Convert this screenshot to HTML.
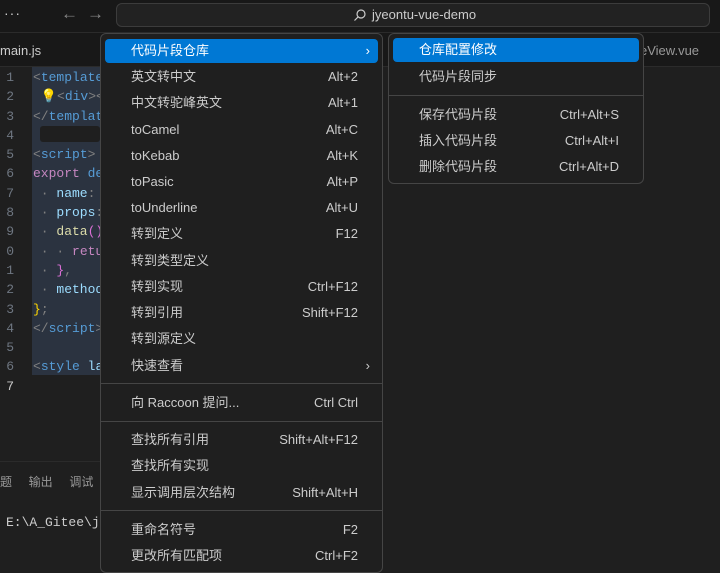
<!DOCTYPE html>
<html><head><meta charset="utf-8"><style>
*{margin:0;padding:0;box-sizing:border-box}
body{width:720px;height:568px;overflow:hidden;background:#1f1f1f;position:relative;font-family:"Segoe UI","Liberation Sans","Noto Sans CJK SC",sans-serif;color:#ccc;font-size:13px}
.abs{position:absolute}
.title{left:0;top:0;width:720px;height:33px;background:#181818;border-bottom:1px solid #2b2b2b}
.search{left:116px;top:3px;width:594px;height:24px;border:1px solid #3c3c3c;border-radius:6px;background:#222}
.tabs{left:0;top:33px;width:720px;height:34px;background:#181818;border-bottom:1px solid #2b2b2b}
.code{font-family:"Liberation Mono","DejaVu Sans Mono",monospace;font-size:13px;white-space:pre}
.ln{left:0;width:14px;text-align:right;color:#6e7681}
.sel{left:32px;top:67px;width:70px;height:308px;background:#2b3340}
.menu{left:100px;top:33px;width:283px;height:540px;background:#1f1f1f;border:1px solid #454545;border-radius:6px}
.it{position:absolute;left:4px;right:4px;height:24px;line-height:24px;padding-left:26px;color:#ccc;font-size:13px}
.it .k{position:absolute;right:20px;top:0}
.hl{background:#0078d4;color:#fff;border-radius:4px}
.sep{position:absolute;left:0;right:0;height:1px;background:#454545}
.sub{left:388px;top:33px;width:256px;height:151px;background:#1f1f1f;border:1px solid #454545;border-radius:6px}
</style></head><body>
<div class="abs title"></div>
<div class="abs" style="left:4px;top:5px;color:#ccc;font-size:14px;letter-spacing:1px">···</div>
<div class="abs" style="left:61px;top:4px;color:#888;font-size:17px">←</div>
<div class="abs" style="left:87px;top:4px;color:#888;font-size:17px">→</div>
<div class="abs search"></div>
<svg class="abs" style="left:353px;top:8px" width="14" height="14" viewBox="0 0 14 14"><circle cx="8" cy="6" r="4" fill="none" stroke="#ccc" stroke-width="1.2"/><line x1="5" y1="9" x2="1.5" y2="12.5" stroke="#ccc" stroke-width="1.2"/></svg>
<div class="abs" style="left:372px;top:7px;color:#ccc;font-size:13px">jyeontu-vue-demo</div>
<div class="abs tabs"></div>
<div class="abs" style="left:0;top:43px;color:#ccc">main.js</div>
<div class="abs" style="left:640px;top:43px;color:#999">eView.vue</div>
<div class="abs sel"></div>
<div class="abs code" style="left:40px;top:126px;width:60px;height:16px;background:#1f1f1f;border-radius:3px"></div>
<div class="abs code ln" style="top:68px;line-height:19.3px">1
2
3
4
5
6
7
8
9
0
1
2
3
4
5
6
<span style="color:#ccc">7</span></div>
<div class="abs code" style="left:33px;top:68px;line-height:19.3px;color:#808080"><span style="color:#808080">&lt;</span><span style="color:#569cd6">template</span>
 <span>💡</span>&lt;<span style="color:#569cd6">div</span>&gt;&lt;/
&lt;/<span style="color:#569cd6">templat</span>

&lt;<span style="color:#569cd6">script</span>&gt;
<span style="color:#c586c0">export</span> <span style="color:#569cd6">de</span>
 · <span style="color:#9cdcfe">name</span>: <span style="color:#ce9178">"</span>
 · <span style="color:#9cdcfe">props</span>:
 · <span style="color:#dcdcaa">data</span><span style="color:#da70d6">()</span>
 · · <span style="color:#c586c0">retur</span>
 · <span style="color:#da70d6">}</span>,
 · <span style="color:#9cdcfe">methods</span>
<span style="color:#ffd700">}</span>;
&lt;/<span style="color:#569cd6">script</span>&gt;

&lt;<span style="color:#569cd6">style</span> <span style="color:#9cdcfe">la</span></div>
<div class="abs" style="left:0;top:461px;width:100px;height:1px;background:#2b2b2b"></div>
<div class="abs" style="left:0;top:473px;font-size:12px;color:#999">题 &nbsp; &nbsp; 输出 &nbsp; &nbsp; 调试</div>
<div class="abs code" style="left:6px;top:515px;color:#ccc">E:\A_Gitee\jy</div>

<div class="abs menu">
<div class="it hl" style="top:5px">代码片段仓库<span class="k" style="right:8px">›</span></div>
<div class="it" style="top:31px">英文转中文<span class="k">Alt+2</span></div>
<div class="it" style="top:57px">中文转驼峰英文<span class="k">Alt+1</span></div>
<div class="it" style="top:84px">toCamel<span class="k">Alt+C</span></div>
<div class="it" style="top:110px">toKebab<span class="k">Alt+K</span></div>
<div class="it" style="top:136px">toPasic<span class="k">Alt+P</span></div>
<div class="it" style="top:162px">toUnderline<span class="k">Alt+U</span></div>
<div class="it" style="top:188px">转到定义<span class="k">F12</span></div>
<div class="it" style="top:215px">转到类型定义</div>
<div class="it" style="top:241px">转到实现<span class="k">Ctrl+F12</span></div>
<div class="it" style="top:267px">转到引用<span class="k">Shift+F12</span></div>
<div class="it" style="top:293px">转到源定义</div>
<div class="it" style="top:320px">快速查看<span class="k" style="right:8px">›</span></div>
<div class="sep" style="top:349px"></div>
<div class="it" style="top:357px">向 Raccoon 提问...<span class="k">Ctrl Ctrl</span></div>
<div class="sep" style="top:387px"></div>
<div class="it" style="top:394px">查找所有引用<span class="k">Shift+Alt+F12</span></div>
<div class="it" style="top:420px">查找所有实现</div>
<div class="it" style="top:447px">显示调用层次结构<span class="k">Shift+Alt+H</span></div>
<div class="sep" style="top:476px"></div>
<div class="it" style="top:484px">重命名符号<span class="k">F2</span></div>
<div class="it" style="top:510px">更改所有匹配项<span class="k">Ctrl+F2</span></div>
</div>

<div class="abs sub">
<div class="it hl" style="top:4px">仓库配置修改</div>
<div class="it" style="top:31px">代码片段同步</div>
<div class="sep" style="top:61px"></div>
<div class="it" style="top:69px">保存代码片段<span class="k">Ctrl+Alt+S</span></div>
<div class="it" style="top:95px">插入代码片段<span class="k">Ctrl+Alt+I</span></div>
<div class="it" style="top:121px">删除代码片段<span class="k">Ctrl+Alt+D</span></div>
</div>
</body></html>
